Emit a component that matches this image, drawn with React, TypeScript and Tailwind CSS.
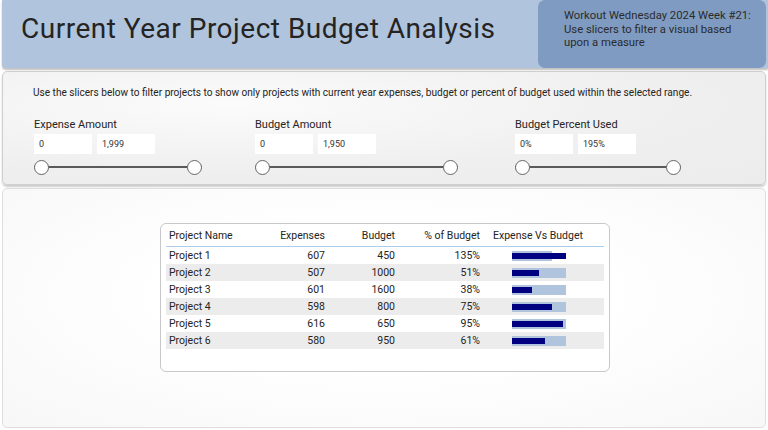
import React from 'react';

const rows = [
  { name: 'Project 1', expenses: 607, budget: 450, pct: '135%' },
  { name: 'Project 2', expenses: 507, budget: 1000, pct: '51%' },
  { name: 'Project 3', expenses: 601, budget: 1600, pct: '38%' },
  { name: 'Project 4', expenses: 598, budget: 800, pct: '75%' },
  { name: 'Project 5', expenses: 616, budget: 650, pct: '95%' },
  { name: 'Project 6', expenses: 580, budget: 950, pct: '61%' },
];

const font = { fontFamily: 'Roboto, "Noto Sans", sans-serif' };

function Slicer({ label, min, max, width, trackWidth }: { label: string; min: string; max: string; width: string; trackWidth: string }) {
  return (
    <div className={`${width} flex flex-col`}>
      <div className="text-[11px] leading-[14px] text-[#252423] h-[14px]">{label}</div>
      <div className="flex gap-[5px] mt-[2px]">
        <div className="w-[58px] h-[20px] bg-white text-[9px] leading-[20px] pl-[5px] text-[#333]">{min}</div>
        <div className="w-[58px] h-[20px] bg-white text-[9px] leading-[20px] pl-[5px] text-[#333]">{max}</div>
      </div>
      <div className={`${trackWidth} relative h-[16px] mt-[5px] flex items-center`}>
        <div className="h-[2px] w-full bg-[#5a5a5a]" />
        <div className="absolute left-0 top-[1px] w-[15px] h-[15px] rounded-full bg-white border-[1.5px] border-[#666]" />
        <div className="absolute right-0 top-[1px] w-[15px] h-[15px] rounded-full bg-white border-[1.5px] border-[#666]" />
      </div>
    </div>
  );
}

export default function App() {
  return (
    <div className="w-[768px] h-[430px] bg-white overflow-hidden flex flex-col" style={font}>
      {/* header */}
      <div className="ml-[2px] h-[68px] bg-[#b0c4de] rounded-bl-[4px] shadow-[0_2px_2px_rgba(0,0,0,0.25)] flex shrink-0">
        <div className="flex-1 pl-[19px] pt-[12px] text-[28px] leading-[34px] text-[#252423] tracking-[0.5px]">
          Current Year Project Budget Analysis
        </div>
        <div className="w-[228px] mr-[2px] h-[68px] bg-[#7f9bc1] rounded-[7px] pl-[26px] pt-[9px] text-[11.3px] leading-[13.5px] text-[#2b2b2b]">
          Workout Wednesday 2024 Week #21:
          <br />
          Use slicers to filter a visual based
          <br />
          upon a measure
        </div>
      </div>

      {/* slicers */}
      <div className="mx-[2px] mt-[3px] h-[114px] shrink-0 rounded-[5px] border border-[#cfcfcf] shadow-[0_2px_2px_rgba(0,0,0,0.2)] bg-[radial-gradient(ellipse_at_30%_30%,#fbfbfb_0%,#efefef_60%,#ececec_100%)] pl-[30px] pt-[14px]">
        <div className="text-[10.1px] leading-[14px] text-[#252423]">
          Use the slicers below to filter projects to show only projects with current year expenses, budget or percent of budget used within the selected range.
        </div>
        <div className="flex mt-[18px] pl-[1px]">
          <Slicer label="Expense Amount" min="0" max="1,999" width="w-[221px]" trackWidth="w-[168px]" />
          <Slicer label="Budget Amount" min="0" max="1,950" width="w-[260px]" trackWidth="w-[203px]" />
          <Slicer label="Budget Percent Used" min="0%" max="195%" width="w-[200px]" trackWidth="w-[166px]" />
        </div>
      </div>

      {/* main */}
      <div className="mx-[2px] mt-[3px] mb-[2px] flex-1 rounded-[5px] border border-[#dedede] bg-[radial-gradient(ellipse_at_50%_45%,#ffffff_40%,#f7f7f7_100%)] pl-[157px] pt-[34px]">
        <div className="w-[450px] h-[149px] rounded-[6px] border border-[#c8c8c8] bg-white px-[5px] pt-[2px]">
          <div className="flex h-[21px] items-center border-b-[1.5px] border-[#a9cdea] text-[10.5px] text-[#252423]">
            <div className="w-[90px] pl-[3px]">Project Name</div>
            <div className="w-[72px] pr-[3px] text-right">Expenses</div>
            <div className="w-[70px] pr-[3px] text-right">Budget</div>
            <div className="w-[85px] pr-[3px] text-right">% of Budget</div>
            <div className="w-[110px] text-center">Expense Vs Budget</div>
          </div>
          {rows.map((r, i) => {
            const max = Math.max(r.expenses, r.budget);
            const full = 54;
            return (
              <div
                key={r.name}
                className={`flex h-[17px] items-center text-[10.5px] text-[#252423] ${i % 2 === 1 ? 'bg-[#ececec]' : 'bg-white'}`}
              >
                <div className="w-[90px] pl-[3px]">{r.name}</div>
                <div className="w-[72px] pr-[3px] text-right">{r.expenses}</div>
                <div className="w-[70px] pr-[3px] text-right">{r.budget}</div>
                <div className="w-[85px] pr-[3px] text-right">{r.pct}</div>
                <div className="w-[110px] pl-[29px] flex items-center">
                  <div className="relative h-[10px]" style={{ width: full }}>
                    <div className="absolute left-0 top-0 h-[10px] bg-[#b0c4de]" style={{ width: Math.round((r.budget / max) * full) }} />
                    <div className="absolute left-0 top-[2px] h-[6px] bg-[#000080]" style={{ width: Math.round((r.expenses / max) * full) }} />
                  </div>
                </div>
              </div>
            );
          })}
        </div>
      </div>
    </div>
  );
}
